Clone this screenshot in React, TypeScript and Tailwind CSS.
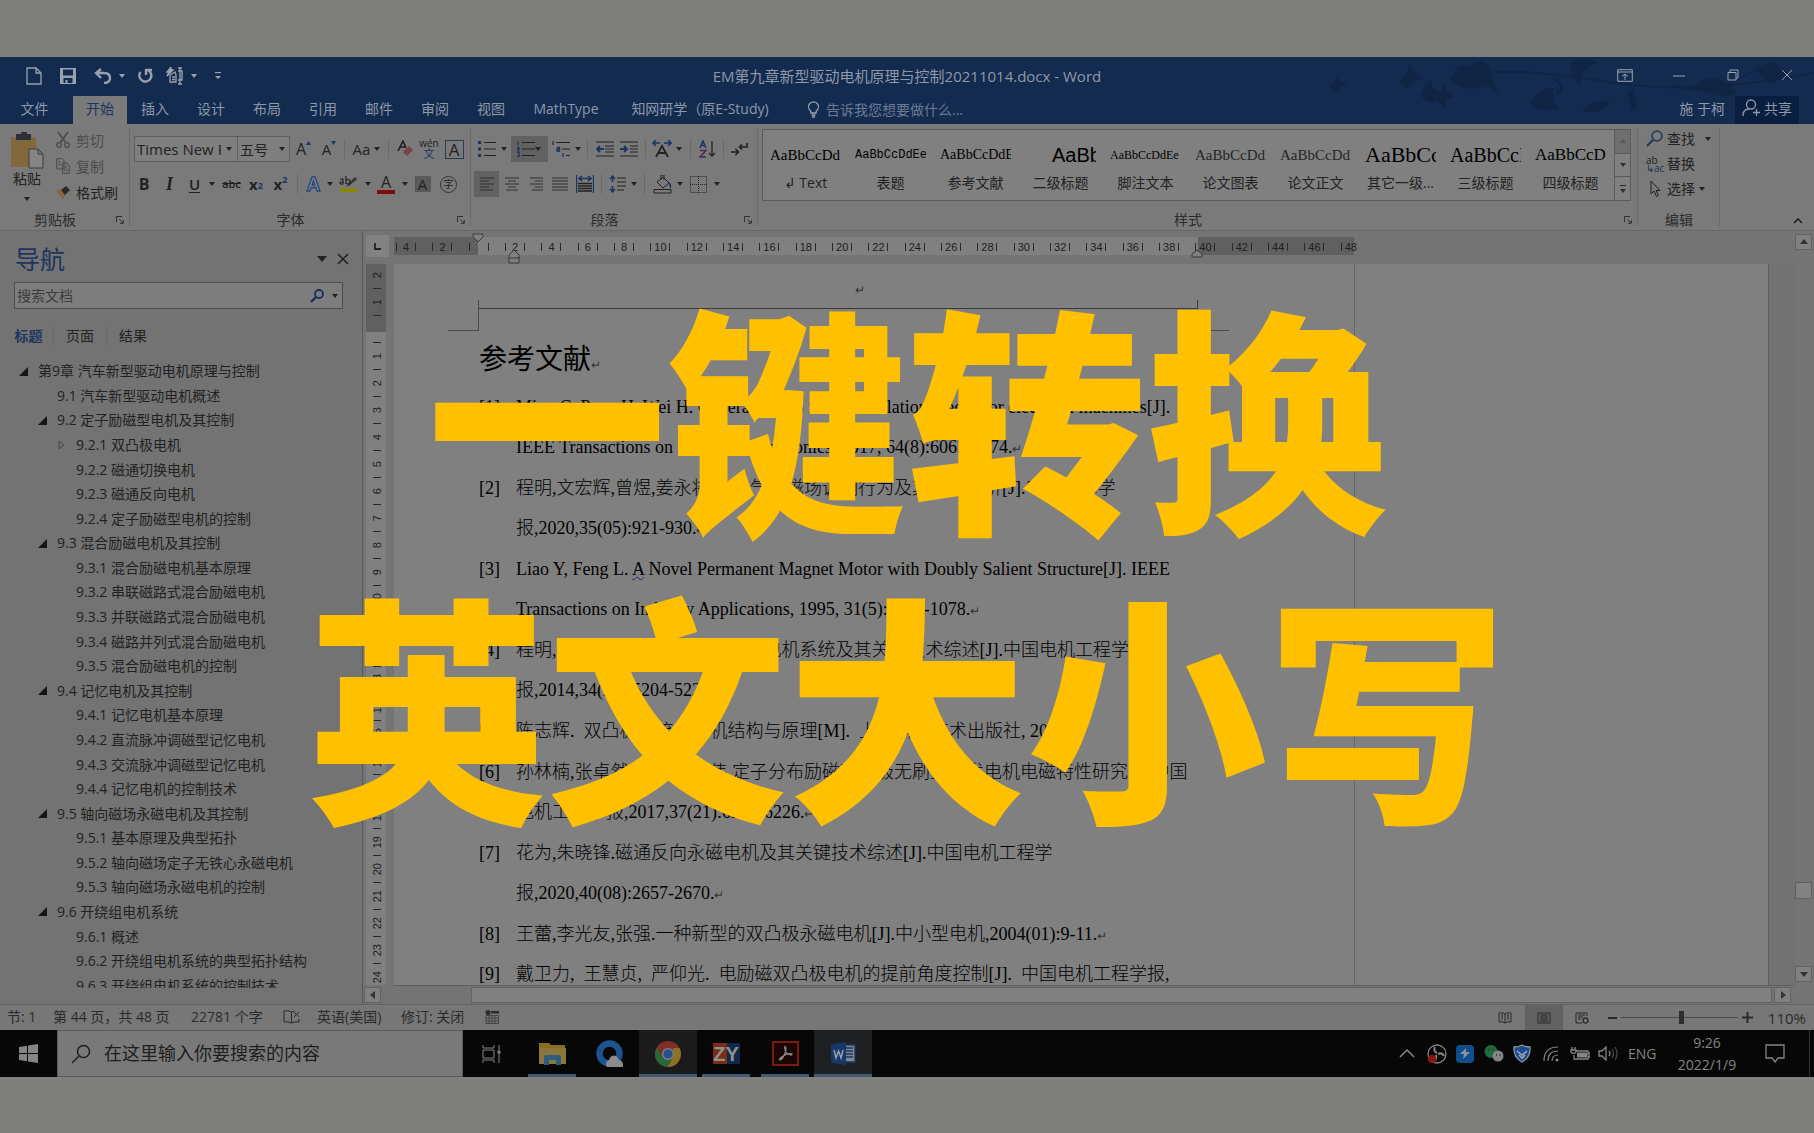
import { ReactNode } from 'react';
import clsx from 'clsx';

const UI = 'font-["Open_Sans","Noto_Sans_CJK_SC",sans-serif]';
const SERIF = 'font-["Liberation_Serif","Noto_Sans_CJK_SC",serif]';
const SANS = 'font-["Liberation_Sans","Noto_Sans_CJK_SC",sans-serif]';
const MONO = 'font-["Liberation_Mono",monospace]';

const TABS = ['插入', '设计', '布局', '引用', '邮件', '审阅', '视图'];

interface Heading {
    level: number;
    text: string;
    mark?: 'open' | 'closed';
}

const HEADINGS: Heading[] = [
    { level: 0, text: '第9章 汽车新型驱动电机原理与控制', mark: 'open' },
    { level: 1, text: '9.1 汽车新型驱动电机概述' },
    { level: 1, text: '9.2 定子励磁型电机及其控制', mark: 'open' },
    { level: 2, text: '9.2.1 双凸极电机', mark: 'closed' },
    { level: 2, text: '9.2.2 磁通切换电机' },
    { level: 2, text: '9.2.3 磁通反向电机' },
    { level: 2, text: '9.2.4 定子励磁型电机的控制' },
    { level: 1, text: '9.3 混合励磁电机及其控制', mark: 'open' },
    { level: 2, text: '9.3.1 混合励磁电机基本原理' },
    { level: 2, text: '9.3.2 串联磁路式混合励磁电机' },
    { level: 2, text: '9.3.3 并联磁路式混合励磁电机' },
    { level: 2, text: '9.3.4 磁路并列式混合励磁电机' },
    { level: 2, text: '9.3.5 混合励磁电机的控制' },
    { level: 1, text: '9.4 记忆电机及其控制', mark: 'open' },
    { level: 2, text: '9.4.1 记忆电机基本原理' },
    { level: 2, text: '9.4.2 直流脉冲调磁型记忆电机' },
    { level: 2, text: '9.4.3 交流脉冲调磁型记忆电机' },
    { level: 2, text: '9.4.4 记忆电机的控制技术' },
    { level: 1, text: '9.5 轴向磁场永磁电机及其控制', mark: 'open' },
    { level: 2, text: '9.5.1 基本原理及典型拓扑' },
    { level: 2, text: '9.5.2 轴向磁场定子无铁心永磁电机' },
    { level: 2, text: '9.5.3 轴向磁场永磁电机的控制' },
    { level: 1, text: '9.6 开绕组电机系统', mark: 'open' },
    { level: 2, text: '9.6.1 概述' },
    { level: 2, text: '9.6.2 开绕组电机系统的典型拓扑结构' },
    { level: 2, text: '9.6.3 开绕组电机系统的控制技术' },
];

const INDENT = ['pl-[16px]', 'pl-[35px]', 'pl-[54px]'];

const STYLES: { name: string; sample: string; look: string }[] = [
    { name: '↲ Text', sample: 'AaBbCcDd', look: `${SERIF} text-[15px] text-black` },
    { name: '表题', sample: 'AaBbCcDdEe', look: `${MONO} text-[12px] text-black` },
    { name: '参考文献', sample: 'AaBbCcDdEe', look: `${SERIF} text-[14px] text-black` },
    { name: '二级标题', sample: 'AaBbC', look: `${SANS} text-[20px] text-black pl-[27px]` },
    { name: '脚注文本', sample: 'AaBbCcDdEe', look: `${SERIF} text-[12px] text-black` },
    { name: '论文图表', sample: 'AaBbCcDdEe', look: `${SERIF} text-[15px] text-[#262626]` },
    { name: '论文正文', sample: 'AaBbCcDdEe', look: `${SERIF} text-[15px] text-[#262626]` },
    { name: '其它一级...', sample: 'AaBbCc', look: `${SERIF} text-[22px] text-black` },
    { name: '三级标题', sample: 'AaBbCcD', look: `${SERIF} text-[20px] text-black` },
    { name: '四级标题', sample: 'AaBbCcDd', look: `${SERIF} text-[17px] text-black` },
];

const REFS: { no?: string; text: ReactNode; end?: boolean }[] = [
    { no: '[1]', text: 'Ming C, Peng H, Wei H. General airgap field modulation theory for electrical machines[J].' },
    { text: 'IEEE Transactions on Industrial Electronics, 2017, 64(8):6063-6074.', end: true },
    { no: '[2]', text: '程明,文宏辉,曾煜,姜永将.电机气隙磁场调制行为及其转矩分析[J].电工技术学' },
    { text: '报,2020,35(05):921-930.', end: true },
    {
        no: '[3]',
        text: (
            <>
                Liao Y, Feng L. <u className="decoration-[#1c2f6c] decoration-wavy decoration-1">A</u> Novel Permanent Magnet Motor with Doubly Salient Structure[J]. IEEE
            </>
        ),
    },
    { text: 'Transactions on Industry Applications, 1995, 31(5):1069-1078.', end: true },
    { no: '[4]', text: '程明,张淦,花为.定子永磁型无刷电机系统及其关键技术综述[J].中国电机工程学' },
    { text: '报,2014,34(29):5204-5220.', end: true },
    { no: '[5]', text: '陈志辉.  双凸极直流发电机结构与原理[M].  上海科学技术出版社, 2014.', end: true },
    { no: '[6]', text: '孙林楠,张卓然,陈旭,王小伟.定子分布励磁双凸极无刷直流发电机电磁特性研究[J].中国' },
    { text: '电机工程学报,2017,37(21):6218-6226.', end: true },
    { no: '[7]', text: '花为,朱晓锋.磁通反向永磁电机及其关键技术综述[J].中国电机工程学' },
    { text: '报,2020,40(08):2657-2670.', end: true },
    { no: '[8]', text: '王蕾,李光友,张强.一种新型的双凸极永磁电机[J].中小型电机,2004(01):9-11.', end: true },
    { no: '[9]', text: '戴卫力,  王慧贞,  严仰光.  电励磁双凸极电机的提前角度控制[J].  中国电机工程学报,' },
];

const H_MARKS = ['4', '2', '', ...Array.from({ length: 24 }, (_, i) => String((i + 1) * 2))];
const V_MARKS = ['2', '1', '', ...Array.from({ length: 24 }, (_, i) => String(i + 1))];

function Svg({ w, h = w, box, className, children }: { w: number; h?: number; box?: string; className?: string; children: ReactNode }) {
    return (
        <svg width={w} height={h} viewBox={box ?? `0 0 ${w} ${h}`} fill="none" stroke="currentColor" strokeWidth="1.3" className={clsx('shrink-0', className)} aria-hidden="true">
            {children}
        </svg>
    );
}

function Caret({ className }: { className?: string }) {
    return (
        <Svg w={6} h={4} className={className}>
            <path d="M0 0h6L3 4z" fill="currentColor" stroke="none" />
        </Svg>
    );
}

function Tool({ label, className, children }: { label: string; className: string; children: ReactNode }) {
    return (
        <button type="button" aria-label={label} className={clsx('flex h-[26px] shrink-0 items-center justify-center', className)}>
            {children}
        </button>
    );
}

function Sep({ className }: { className: string }) {
    return (
        <span className={clsx('flex shrink-0 justify-center', className)}>
            <span className="h-5 w-px bg-[#6a6a6a]" />
        </span>
    );
}

function Group({ label, className, launcher = true, children }: { label: string; className: string; launcher?: boolean; children: ReactNode }) {
    return (
        <section aria-label={label} className={clsx('relative flex flex-col', className)}>
            <div className="flex-1">{children}</div>
            <p className={clsx('h-5 text-center leading-5 text-[#2b2b2b]', launcher && 'pr-5')}>{label}</p>
            {launcher && (
                <button type="button" aria-label={`${label}选项`} className="absolute right-1.5 bottom-1.5 text-[#2f2f2f]">
                    <Svg w={8}>
                        <path d="M.5 6V.5H6M3.5 3.5 7 7M7.3 4v3.3H4" strokeWidth="1" />
                    </Svg>
                </button>
            )}
            <span className="absolute top-1 right-0 bottom-1 w-px bg-[#6b6b6b]" />
        </section>
    );
}

function Lines({ rows }: { rows: [number, number][] }) {
    return (
        <Svg w={16} h={14} className="text-[#303030]">
            {rows.map(([from, to], i) => (
                <path key={i} d={`M${from} ${i * 3 + 1}H${to}`} strokeWidth="1" />
            ))}
        </Svg>
    );
}

function TitleBar() {
    return (
        <header className="relative shrink-0 overflow-hidden bg-[#142b50] text-[#8d98a8]">
            <svg className="absolute top-0 right-0 h-[67px] w-[560px]" viewBox="0 0 560 67" aria-hidden="true">
                <g fill="#102444">
                    <path d="M75 30q6-2 7-10l3-5v9l9 5-9 1 2 6-9-4z" />
                    <path d="M146 24l7-8 2-10 5 10 10 5-11 3-6 8zM166 38l5-10 6-5 2 9 12 5-11 2 1 8-10-4z" />
                    <path d="M178 42l8-6 3-12 4 10 9 5-10 4 0 11-7-9zM196 22q8-18 20-13 14-10 20 4l8 24-10-8q-24 8-38-7zM276 48q8-18 24-17-4 12 6 21-16 4-30-4zM318 6q12-8 24 0-16 4-16 22-12-10-8-22zM328 54q12-14 28-9-12 14-28 9zM374 34l6-3 3 20-6 3zM440 28q18-12 32-2l12 10q-24 8-44-8zM500 12l18-7 18 12-20 10z" />
                </g>
                <path d="M198 20q60-12 150 4 90 16 212-8M300 22q14 8 2 16M420 28q30 14 80-14" fill="none" stroke="#102444" strokeWidth="2" />
            </svg>

            <div className="relative flex h-[37px] items-center">
                <div className="flex w-[222px] shrink-0 items-center pl-[26px] text-[#98a1ae]">
                    <button type="button" aria-label="新建" className="w-[34px]">
                        <Svg w={16} h={18}>
                            <path d="M1 1h9l5 5v11H1zM10 1v5h5" />
                        </Svg>
                    </button>
                    <button type="button" aria-label="保存" className="w-[34px]">
                        <Svg w={16}>
                            <path d="M0 0h16v16H0zM3 1.500v6h10v-6zM3.500 10v5h2v-3h2v3h5v-5z" fill="currentColor" fillRule="evenodd" stroke="none" />
                        </Svg>
                    </button>
                    <button type="button" aria-label="撤消" className="flex w-[43px] items-center gap-[7px]">
                        <Svg w={18} h={16}>
                            <path d="M2 5h8q6 0 6 5t-6 5M7 1 2 5l5 5" strokeWidth="2.400" />
                        </Svg>
                        <Caret />
                    </button>
                    <button type="button" aria-label="重复" className="w-[29px]">
                        <Svg w={16}>
                            <path d="M3.500 4A6 6 0 1 0 11 2.200M9 1v6M8.500 2H15" strokeWidth="2.400" />
                        </Svg>
                    </button>
                    <button type="button" aria-label="触摸模式" className="flex w-[49px] items-center gap-[7px]">
                        <Svg w={18}>
                            <path d="M5 0 1 5h2L1 9l6-6H5z" fill="currentColor" />
                            <path d="M4 15V8l5-3 1 3v7zM6 10h3M6 12.500h3" />
                            <path d="M12 4h4v9h-4M14 1v16M12 1h4M12 17h4" />
                        </Svg>
                        <Caret />
                    </button>
                    <button type="button" aria-label="自定义快速访问工具栏">
                        <Svg w={6} h={8}>
                            <path d="M0 .5h6" />
                            <path d="M0 4h6L3 7z" fill="currentColor" stroke="none" />
                        </Svg>
                    </button>
                </div>
                <h1 className="flex-1 text-center text-[15px] leading-5">EM第九章新型驱动电机原理与控制20211014.docx - Word</h1>
                <div className="flex w-[222px] shrink-0 justify-end text-[#9aa2ae]">
                    <button type="button" aria-label="功能区显示选项" className="flex w-[54px] justify-center">
                        <Svg w={16} h={13}>
                            <path d="M.7.7h14.600v11.600H.7zM1 3h14M8 11V5M5 7.500 8 5l3 2.500" strokeWidth="1" />
                        </Svg>
                    </button>
                    <button type="button" aria-label="最小化" className="flex w-[54px] items-center justify-center">
                        <Svg w={12} h={2}>
                            <path d="M0 1h12" strokeWidth="1" />
                        </Svg>
                    </button>
                    <button type="button" aria-label="还原" className="flex w-[54px] justify-center">
                        <Svg w={12}>
                            <path d="M1 3.500h8V11H1zM3 3V1h8v8H9" strokeWidth="1" />
                        </Svg>
                    </button>
                    <button type="button" aria-label="关闭" className="flex w-[54px] justify-center">
                        <Svg w={12}>
                            <path d="m1 1 10 10M11 1 1 11" strokeWidth="1" />
                        </Svg>
                    </button>
                </div>
            </div>

            <nav className="relative flex h-[30px] items-center pt-0.5 text-[14px] [&>button]:h-full [&>button]:pb-1">
                <button type="button" className="w-[73px] pr-1 text-center">文件</button>
                <button type="button" className="w-[54px] bg-[#7a7a7a] text-[#1c3560]">开始</button>
                {TABS.map(tab => (
                    <button key={tab} type="button" className="w-14 text-center">{tab}</button>
                ))}
                <button type="button" className="w-[94px]">MathType</button>
                <button type="button" className="w-[174px]">知网研学（原E-Study)</button>
                <label className="ml-5 flex flex-1 items-center gap-1.5 pb-0.5 text-[#6c7b93]">
                    <Svg w={13} h={17} className="text-[#98a1ae]">
                        <path d="M4 12q0-2-2-4a5 5 0 1 1 9 0q-2 2-2 4zM4.500 14h4M5 16h3" />
                    </Svg>
                    <input aria-label="操作说明搜索" placeholder="告诉我您想要做什么..." className="w-[200px] bg-transparent outline-none placeholder:text-[#6c7b93]" />
                </label>
                <button type="button" className="mr-2.5">施 于柯</button>
                <button type="button" className="mr-[15px] flex w-16 items-center justify-center gap-1 bg-[#0a1f40]">
                    <Svg w={18}>
                        <circle cx="9" cy="5.500" r="4.500" />
                        <path d="M1 17q0-7 6-7M11 13.500h7M14.500 10v7" />
                    </Svg>
                    共享
                </button>
            </nav>
        </header>
    );
}

function ClipboardGroup() {
    return (
        <Group label="剪贴板" className="w-[130px] shrink-0">
            <div className="flex pt-[3px]">
                <button type="button" className="flex w-[56px] shrink-0 flex-col items-center pt-[5px] pr-0.5">
                    <Svg w={34} h={37}>
                        <path d="M1 5h25v30H1z" fill="#82683a" stroke="none" />
                        <path d="M6 2h5a3 3 0 0 1 6 0h4v6H6z" fill="#2d3038" stroke="none" />
                        <path d="M19 17h9l5 5v14H19zM28 17v5h5" fill="#858585" stroke="#3d3d3d" strokeWidth="1" />
                    </Svg>
                    <span className="leading-[20px]">粘贴</span>
                    <Caret className="mt-2" />
                </button>
                <div className="flex flex-col whitespace-nowrap">
                    <button type="button" className="flex h-[26px] items-center gap-1.5 text-[#4c4c4c]">
                        <Svg w={14} h={16}>
                            <path d="m2 0 8 11M12 0 4 11" strokeWidth="1.800" />
                            <circle cx="3" cy="13" r="2.300" />
                            <circle cx="11" cy="13" r="2.300" />
                        </Svg>
                        剪切
                    </button>
                    <button type="button" className="flex h-[26px] items-center gap-1.5 text-[#4c4c4c]">
                        <Svg w={14} h={16}>
                            <path d="M.7.7H6l2 2V11H.7zM6.500 5H11l2.300 3v7.300H6.500zM2.500 4h2M2.500 6.500h2M8 9h3M8 12h4" fill="#777" strokeWidth="1" />
                        </Svg>
                        复制
                    </button>
                    <button type="button" className="flex h-[26px] items-center gap-1.5">
                        <Svg w={14} h={15}>
                            <path d="m0 6 5-2 5 5-3 5z" fill="#86683a" stroke="none" />
                            <path d="m5 5 4 5 5-5-4-4z" fill="#2b2b2b" stroke="none" />
                        </Svg>
                        格式刷
                    </button>
                </div>
            </div>
        </Group>
    );
}

function FontGroup() {
    return (
        <Group label="字体" className="w-[341px] shrink-0">
            <div className="flex items-center pt-3 pl-1">
                <label className="relative flex h-[26px] w-[104px] items-center border border-[#5f5f5f] bg-[#7f7f7f]">
                    <select aria-label="字体名称" className="w-[86px] appearance-none overflow-hidden pl-0.5 text-[15px] whitespace-nowrap outline-none">
                        <option>Times New Roman</option>
                    </select>
                    <Caret className="absolute right-[5px]" />
                </label>
                <label className="relative flex h-[26px] w-[52px] items-center border border-l-0 border-[#5f5f5f] bg-[#7f7f7f]">
                    <select aria-label="字号" className="w-full appearance-none pl-0.5 outline-none">
                        <option>五号</option>
                    </select>
                    <Caret className="absolute right-1" />
                </label>
                <Tool label="增大字号" className="w-[27px] text-[16px]">
                    A
                    <Svg w={5} h={4} className="mb-3 text-[#1c3560]"><path d="M0 4h5L2.500 0z" fill="currentColor" stroke="none" /></Svg>
                </Tool>
                <Tool label="减小字号" className="w-6 text-[15px]">
                    A
                    <Svg w={5} h={4} className="mb-3 text-[#1c3560]"><path d="M0 0h5L2.500 4z" fill="currentColor" stroke="none" /></Svg>
                </Tool>
                <Sep className="w-[7px]" />
                <Tool label="更改大小写" className="w-[37px] gap-1 text-[15px]">Aa<Caret /></Tool>
                <Sep className="w-[7px]" />
                <Tool label="清除所有格式" className="w-[25px]">
                    <Svg w={16} h={18}>
                        <path d="M1 11 6 1l3 7M3 7h5" strokeWidth="1.600" />
                        <path d="m6 12 6-6 4 4-6 6z" fill="#7d4048" stroke="none" />
                    </Svg>
                </Tool>
                <Tool label="拼音指南" className="w-6 flex-col">
                    <span className="text-[10px] leading-[9px]">wén</span>
                    <span className="text-[11px] leading-[11px] text-[#1c3560]">文</span>
                </Tool>
                <Tool label="字符边框" className="w-[26px]">
                    <span className="h-[19px] w-[19px] border border-[#2c3c50] text-center text-[17px] leading-[17px]">A</span>
                </Tool>
            </div>
            <div className="flex items-center pt-[9px] pl-0.5">
                <Tool label="加粗" className="w-6 text-[16px] font-bold">B</Tool>
                <Tool label="倾斜" className={clsx('w-[27px] text-[18px] font-bold italic', SERIF)}>I</Tool>
                <Tool label="下划线" className="w-[23px] text-[15px] font-semibold underline underline-offset-2">U</Tool>
                <Tool label="下划线样式" className="w-3"><Caret /></Tool>
                <Tool label="删除线" className="w-[27px] text-[11px] font-semibold line-through">abc</Tool>
                <Tool label="下标" className="w-[22px] text-[15px] font-bold">x<sub className="text-[9px] text-[#1c3560]">2</sub></Tool>
                <Tool label="上标" className="w-[27px] text-[15px] font-bold">x<sup className="text-[9px] text-[#1c3560]">2</sup></Tool>
                <Sep className="w-[7px]" />
                <Tool label="文本效果" className="w-6">
                    <Svg w={15} h={16}>
                        <path d="M1 15 6 1h3l5 14h-3l-1-3.500H5L4 15zM6 9h3L7.500 4.500z" stroke="#254a78" fill="#7f8790" />
                    </Svg>
                </Tool>
                <Tool label="文本效果选项" className="w-[9px]"><Caret /></Tool>
                <Tool label="突出显示" className="w-[30px]">
                    <Svg w={20} h={18}>
                        <path d="M1 13h18v4H1z" fill="#87850a" stroke="none" />
                        <path d="m7 12 2-3 7-7 2 2-7 6z" fill="#333" stroke="none" />
                        <path d="M1 4.500q3-1.500 3 0V9q-3 .5-3-1t3-1.500M7 1v7.500q4 1 4-2T7 5" strokeWidth="1.200" />
                    </Svg>
                </Tool>
                <Tool label="突出显示颜色" className="w-[7px]"><Caret /></Tool>
                <Tool label="字体颜色" className="w-[30px] flex-col">
                    <span className="text-[16px] leading-[15px]">A</span>
                    <span className="h-1 w-[18px] bg-[#7d0d0d]" />
                </Tool>
                <Tool label="颜色选项" className="w-[7px]"><Caret /></Tool>
                <Tool label="字符底纹" className="w-[29px]">
                    <span className="h-4 w-4 bg-[#595959] text-center text-[15px] leading-4">A</span>
                </Tool>
                <Tool label="带圈字符" className="w-[23px]">
                    <span className="h-[17px] w-[17px] rounded-full border border-[#333] text-center text-[10px] leading-[15px]">字</span>
                </Tool>
            </div>
        </Group>
    );
}

function ParagraphGroup() {
    return (
        <Group label="段落" className="w-[287px] shrink-0">
            <div className="flex items-center pt-3 pl-[3px]">
                <Tool label="项目符号" className="w-[25px]">
                    <Svg w={18} h={16}>
                        <path d="M0 0h3v3H0zM0 6.500h3v3H0zM0 13h3v3H0z" fill="#1c3560" stroke="none" />
                        <path d="M6 1.500h12M6 8h12M6 14.500h12" strokeWidth="1" />
                    </Svg>
                </Tool>
                <Tool label="项目符号库" className="w-2.5"><Caret /></Tool>
                <Tool label="编号" className="ml-0.5 w-[37px] justify-between bg-[#626262] pr-1 pl-[3px]">
                    <Svg w={18} h={16}>
                        <path d="M1 0v4M0 6.500h2v2H0M0 11h2v4.500H0" stroke="#1c3560" />
                        <path d="M5 1.500h13M5 8h13M5 14.500h13" strokeWidth="1" />
                    </Svg>
                    <Caret />
                </Tool>
                <Tool label="多级列表" className="w-[25px]">
                    <Svg w={18} h={16}>
                        <path d="M1 0v4M5 6.500h2.500V10H5V8h2M11 12v4" stroke="#1c3560" />
                        <path d="M4 1.500h14M10 8h8M14 14.500h4" strokeWidth="1" />
                    </Svg>
                </Tool>
                <Tool label="多级列表库" className="w-[9px]"><Caret /></Tool>
                <Sep className="w-[11px]" />
                <Tool label="减少缩进量" className="w-6">
                    <Svg w={18} h={16}>
                        <path d="M0 1h18M9 5h9M9 8h9M9 11h9M0 15h18" strokeWidth="1" />
                        <path d="M8 8H1M4 5 1 8l3 3" stroke="#1c3560" strokeWidth="2" />
                    </Svg>
                </Tool>
                <Tool label="增加缩进量" className="w-6">
                    <Svg w={18} h={16}>
                        <path d="M0 1h18M10 5h8M10 8h8M10 11h8M0 15h18" strokeWidth="1" />
                        <path d="M0 8h7M4 5l3 3-3 3" stroke="#1c3560" strokeWidth="2" />
                    </Svg>
                </Tool>
                <Sep className="w-2" />
                <Tool label="中文版式" className="w-[26px]">
                    <Svg w={20} h={18}>
                        <path d="M8 3H1M4 0 1 3l3 3M12 3h7M16 0l3 3-3 3" stroke="#1c3560" strokeWidth="1.600" />
                        <path d="m4 17 6-11 6 11M6.500 13h7" strokeWidth="1.800" />
                    </Svg>
                </Tool>
                <Tool label="中文版式选项" className="w-[7px]"><Caret /></Tool>
                <Sep className="w-4" />
                <Tool label="排序" className="w-[19px]">
                    <Svg w={17} h={18}>
                        <path d="m1 8 3-7 3 7M2 5.500h4" stroke="#1c3560" strokeWidth="1.500" />
                        <path d="M1 10.500h6l-6 6.500h6" stroke="#4a2d55" strokeWidth="1.500" />
                        <path d="M13 1v15M10 13l3 3 3-3" />
                    </Svg>
                </Tool>
                <Sep className="w-3" />
                <Tool label="显示编辑标记" className="w-[21px]">
                    <Svg w={17} h={16}>
                        <path d="M16 2v4H9M11 3.500 8.500 6 11 8.500M0 11h7M4.500 8 7.500 11l-3 3" strokeWidth="1.600" />
                    </Svg>
                </Tool>
            </div>
            <div className="flex items-center pt-[9px] pl-[3px]">
                <Tool label="左对齐" className="w-[25px] bg-[#626262]"><Lines rows={[[1, 15], [1, 10], [1, 15], [1, 10], [1, 14]]} /></Tool>
                <Tool label="居中" className="w-[25px]"><Lines rows={[[1, 15], [4, 12], [1, 15], [4, 12], [2, 14]]} /></Tool>
                <Tool label="右对齐" className="w-6"><Lines rows={[[2, 15], [7, 15], [2, 15], [7, 15], [4, 15]]} /></Tool>
                <Tool label="两端对齐" className="w-6"><Lines rows={[[0, 16], [0, 16], [0, 16], [0, 16], [0, 16]]} /></Tool>
                <Tool label="分散对齐" className="w-[26px]">
                    <Svg w={18}>
                        <path d="M.5 0v18M17.500 0v18" stroke="#1c3560" />
                        <path d="M4 3.500h10M6 1 3 3.500 6 6M12 1l3 2.500L12 6" stroke="#1c3560" strokeWidth="1.600" />
                        <path d="M2 8.500h14M2 11h14M2 13.500h14M2 16h14" />
                    </Svg>
                </Tool>
                <Sep className="w-[7px]" />
                <Tool label="行和段落间距" className="w-6">
                    <Svg w={17} h={18}>
                        <path d="M3.500 1v6M1 4l2.500-3L6 4M3.500 11v6M1 14l2.500 3L6 14" stroke="#1c3560" strokeWidth="1.600" />
                        <path d="M8 3h9M8 7h9M8 11h9M8 15h7" strokeWidth="1" />
                    </Svg>
                </Tool>
                <Tool label="行距选项" className="w-[9px]"><Caret /></Tool>
                <Sep className="w-3" />
                <Tool label="底纹" className="w-[25px]">
                    <Svg w={20} h={19}>
                        <path d="m4 7 6-5 6 6-6 5zM8 5V0h3v5" strokeWidth="1" />
                        <path d="M16 7q3 2 2 6-2 0-2-6z" fill="#1c3560" stroke="none" />
                        <path d="M1 14.500h17v3.500H1z" strokeWidth="1" />
                    </Svg>
                </Tool>
                <Tool label="底纹颜色" className="w-2.5"><Caret /></Tool>
                <Tool label="边框" className="w-[26px]">
                    <Svg w={17}>
                        <path d="M.5.5h16v16H.5zM8.500 0v17M0 8.500h17" strokeWidth="1" strokeDasharray="1 1" />
                    </Svg>
                </Tool>
                <Tool label="边框选项" className="w-3"><Caret /></Tool>
            </div>
        </Group>
    );
}

function StylesGroup() {
    return (
        <Group label="样式" className="min-w-0 flex-1">
            <div className="mt-[5px] mr-[7px] ml-1 flex h-[72px] border border-[#5b5b5b] bg-[#808080]">
                <div className="flex min-w-0 flex-1 overflow-hidden">
                    {STYLES.map(style => (
                        <button key={style.name} type="button" className="flex w-[85px] shrink-0 flex-col px-[7px] pt-2.5">
                            <span className={clsx('block h-[30px] w-full overflow-hidden text-left leading-[30px] whitespace-nowrap', style.look)}>{style.sample}</span>
                            <span className="w-full text-center leading-[25px] whitespace-nowrap">{style.name}</span>
                        </button>
                    ))}
                </div>
                <div className="flex w-4 flex-col divide-y divide-[#5b5b5b] border-l border-[#5b5b5b] text-[#2f2f2f]">
                    <button type="button" aria-label="上一行" className="flex flex-1 items-center justify-center bg-[#6e6e6e] text-[#555]"><Caret className="rotate-180" /></button>
                    <button type="button" aria-label="下一行" className="flex flex-1 items-center justify-center"><Caret /></button>
                    <button type="button" aria-label="其他样式" className="flex flex-1 items-center justify-center">
                        <Svg w={6} h={8}>
                            <path d="M0 .5h6" />
                            <path d="M0 4h6L3 8z" fill="currentColor" stroke="none" />
                        </Svg>
                    </button>
                </div>
            </div>
        </Group>
    );
}

function EditGroup() {
    return (
        <div className="flex w-[176px] shrink-0">
            <Group label="编辑" className="w-[82px]" launcher={false}>
                <div className="flex flex-col pt-0.5 pl-2">
                    <button type="button" className="flex h-[25px] items-center gap-1">
                        <Svg w={17}>
                            <circle cx="11" cy="6" r="5" stroke="#1f3c58" strokeWidth="1.600" />
                            <path d="m7 10-6 6" stroke="#1f3c58" strokeWidth="2.200" />
                        </Svg>
                        查找
                        <Caret className="ml-1.5" />
                    </button>
                    <button type="button" className="flex h-[25px] items-center gap-1">
                        <span className="flex w-[17px] flex-col text-[10px] leading-[8px]">
                            <span className="text-left">ab</span>
                            <span className="text-right text-[#1f3050]">↳ac</span>
                        </span>
                        替换
                    </button>
                    <button type="button" className="flex h-[25px] items-center gap-1">
                        <Svg w={17} h={18}>
                            <path d="M5 1v13l3-3 2.500 5.500 2-1L10 10.500h4z" strokeWidth="1" />
                        </Svg>
                        选择
                        <Caret />
                    </button>
                </div>
            </Group>
            <button type="button" aria-label="折叠功能区" className="mt-auto mr-[11px] mb-1.5 ml-auto">
                <Svg w={10} h={7}><path d="m1 6 4-4 4 4" strokeWidth="1.600" /></Svg>
            </button>
        </div>
    );
}

function Mark({ kind }: { kind?: 'open' | 'closed' }) {
    if (kind === 'open') return <Svg w={9}><path d="M9 0v9H0z" fill="#151515" stroke="none" /></Svg>;
    if (kind === 'closed') return <Svg w={9} h={10}><path d="m2 1 5 4-5 4z" strokeWidth="1" stroke="#444" /></Svg>;
    return <span className="w-[9px] shrink-0" />;
}

function NavigationPane() {
    return (
        <aside className="flex w-[363px] shrink-0 flex-col overflow-hidden border-r border-[#5a5a5a] bg-[#737373] text-[#222]">
            <div className="flex items-center pt-2.5 pr-[13px] pl-[15px]">
                <h2 className="flex-1 text-[25px] leading-9 text-[#1c3560]">导航</h2>
                <button type="button" aria-label="任务窗格选项" className="mr-2.5"><Svg w={10} h={6}><path d="M0 0h10L5 6z" fill="currentColor" stroke="none" /></Svg></button>
                <button type="button" aria-label="关闭窗格"><Svg w={12}><path d="m1 1 10 10M11 1 1 11" strokeWidth="1.600" /></Svg></button>
            </div>
            <label className="mt-[5px] mr-[19px] ml-[14px] flex h-[27px] shrink-0 items-center border border-[#4f4f4f] bg-[#7d7d7d] pr-1 pl-0.5">
                <input type="search" aria-label="搜索文档" placeholder="搜索文档" className="min-w-0 flex-1 bg-transparent outline-none placeholder:text-[#3c3c3c]" />
                <Svg w={14} className="text-[#1c2f5c]">
                    <circle cx="9" cy="5" r="4" strokeWidth="1.800" />
                    <path d="m6 8-5 5" strokeWidth="2.400" />
                </Svg>
                <Caret className="ml-2" />
            </label>
            <div className="mt-[17px] flex h-5 items-center divide-x divide-[#6a6a6a]">
                <button type="button" className="w-[54px] pl-1 font-bold leading-5 text-[#1c3560]">标题</button>
                <button type="button" className="w-[53px] leading-5">页面</button>
                <button type="button" className="w-[52px] leading-5">结果</button>
            </div>
            <div className="mt-[13px] mb-4 flex-1 overflow-hidden">
                <ul className="grid h-[639px] auto-rows-fr">
                    {HEADINGS.map(heading => (
                        <li key={heading.text} className={clsx('flex items-center', INDENT[heading.level])}>
                            <button type="button" className="flex items-center gap-2.5 pl-[3px] whitespace-nowrap">
                                <Mark kind={heading.mark} />
                                <span className="leading-5">{heading.text}</span>
                            </button>
                        </li>
                    ))}
                </ul>
            </div>
        </aside>
    );
}

function HorizontalRuler() {
    return (
        <div className="relative h-[33px] shrink-0 text-[11px] leading-[18px] text-[#1d1d1d]">
            <div className="flex pt-1.5">
                <span className="h-[18px] w-[84px] bg-[#606060]" />
                <span className="h-[18px] w-[720px] bg-[#808080]" />
                <span className="h-[18px] w-[156px] bg-[#606060]" />
            </div>
            <div className={clsx('absolute top-[7px] -left-1.5 grid w-[981px] grid-cols-[repeat(27,minmax(0,1fr))]', SANS)}>
                {H_MARKS.map((mark, i) => (
                    <span key={i} className="flex items-center justify-center">
                        <i className="h-2 w-px shrink-0 bg-[#2a2a2a]" />
                        <span className="w-[18px] text-center">{mark}</span>
                        <i className={clsx('h-2 w-px shrink-0', i < H_MARKS.length - 1 && 'bg-[#2a2a2a]')} />
                    </span>
                ))}
            </div>
            <Svg w={12} h={10} className="absolute top-0.5 left-[78px]">
                <path d="M1 1h10v3L6 9 1 4z" fill="#808080" stroke="#3a3a3a" strokeWidth="1" />
            </Svg>
            <Svg w={12} h={15} className="absolute top-[18px] left-[114px]">
                <path d="M1 14V6l5-5 5 5v8zM1 9h10" fill="#808080" stroke="#3a3a3a" strokeWidth="1" />
            </Svg>
            <Svg w={12} h={9} className="absolute top-[18px] left-[797px]">
                <path d="M1 8V5l5-4 5 4v3z" fill="#808080" stroke="#3a3a3a" strokeWidth="1" />
            </Svg>
        </div>
    );
}

function VerticalRuler() {
    return (
        <div className="flex w-[31px] shrink-0 flex-col pl-[3px]">
            <button type="button" aria-label="制表符" className="mt-1 mb-[7px] flex h-[22px] w-[23px] shrink-0 items-center justify-center bg-[#828282]">
                <Svg w={7}><path d="M1 0v6h6" strokeWidth="1.800" /></Svg>
            </button>
            <div className="relative w-5 flex-1 overflow-hidden bg-[#808080]">
                <div className="h-[68px] bg-[#606060]" />
                <div className={clsx('absolute inset-x-0 -top-0.5 pl-0.5 text-[11px] text-[#1d1d1d]', SANS)}>
                    {V_MARKS.map((mark, i) => (
                        <span key={i} className="relative flex h-[27px] items-center justify-center">
                            <span className="rotate-180 [writing-mode:vertical-rl]">{mark}</span>
                            <i className="absolute bottom-0 h-px w-2 bg-[#2a2a2a]" />
                        </span>
                    ))}
                </div>
            </div>
            <span className="h-[19px] shrink-0" />
        </div>
    );
}

function ScrollButton({ label, d }: { label: string; d: string }) {
    return (
        <button type="button" aria-label={label} className="flex h-4 w-[17px] shrink-0 items-center justify-center border border-[#636363] bg-[#808080] text-[#333]">
            <Svg w={8}><path d={d} fill="currentColor" stroke="none" /></Svg>
        </button>
    );
}

function Page() {
    return (
        <article className={clsx('relative min-w-0 flex-1 overflow-hidden bg-[#808080] text-black', SERIF)}>
            <div className="h-full w-[961px] border-r border-[#676767]">
                <p className="h-9 pt-3.5 pl-[461px] text-[12px] leading-6 text-[#333]">↵</p>
                <div className="ml-[54px] flex h-[31px]">
                    <span className="w-[30px] border-b border-[#4a4a4a]" />
                    <span className="w-[720px] border-l border-[#4a4a4a]">
                        <span className="block h-[9px] border-r border-b border-[#3a3a3a]" />
                    </span>
                    <span className="w-[31px] border-b border-[#4a4a4a]" />
                </div>
                <div className="pl-[85px]">
                    <h2 className={clsx('h-14 pt-[9px] text-[28px] leading-10', SANS)}>
                        参考文献<small className="text-[12px] text-[#333]">↵</small>
                    </h2>
                    <div className="grid h-[608px] auto-rows-fr text-[18px] font-light">
                        {REFS.map((line, i) => (
                            <p key={i} className="flex items-center whitespace-pre">
                                <span className="w-[37px] shrink-0">{line.no}</span>
                                <span>
                                    {line.text}
                                    {line.end && <small className="text-[12px] text-[#333]">↵</small>}
                                </span>
                            </p>
                        ))}
                    </div>
                </div>
            </div>
            {/* Text cursor */}
            <Svg w={8} h={14} className="absolute top-[189px] left-[698px]">
                <path d="M1 1q3 0 3 2v8q0 2-3 2M7 1Q4 1 4 3M7 13q-3 0-3-2" strokeWidth="1" />
            </Svg>
        </article>
    );
}

function StatusBar() {
    return (
        <footer className="flex h-[26px] shrink-0 items-center border-t border-[#646464] bg-[#777] pb-0.5 text-[#2b2b2b]">
            <span className="w-[46px] pl-[7px]">节: 1</span>
            <span className="w-[138px] pl-[7px] whitespace-nowrap">第 44 页，共 48 页</span>
            <span className="w-[99px] pl-[7px]">22781 个字</span>
            <button type="button" aria-label="校对" className="w-[34px]">
                <Svg w={17} h={14}>
                    <path d="M8.500 13V2Q5 0 1 1v11q4-1 7.500 1 3-2 7.500-1V9M8.500 2q2-1 3-1M11 2l5 5M16 2l-5 5" strokeWidth="1" />
                </Svg>
            </button>
            <span className="w-[84px]">英语(美国)</span>
            <span className="w-[84px]">修订: 关闭</span>
            <Svg w={14}>
                <path d="M1 5.500h12.500v8H1zM1 8h12M1 11h12M4 5v8M7 5v8M10 5v8" strokeWidth="1" stroke="#444" />
                <path d="M6 1h8v2.500H6z" fill="currentColor" stroke="none" />
                <circle cx="3" cy="2.500" r="2.500" fill="currentColor" stroke="none" />
            </Svg>
            <div className="-mb-0.5 ml-auto flex h-[25px] items-center">
                <button type="button" aria-label="阅读视图" className="flex w-[40px] justify-center">
                    <Svg w={14} h={12}><path d="M7 11V2Q4 0 1 1v9q3-1 6 1 3-2 6-1V1Q10 0 7 2M3 3h2M3 5h2M3 7h2M9 3h2M9 5h2M9 7h2" strokeWidth="1" /></Svg>
                </button>
                <button type="button" aria-label="页面视图" className="flex h-full w-[38px] items-center justify-center bg-[#626262]">
                    <Svg w={14} h={12}><path d="M1 1h12v10H1zM3 3h8M3 5h8M3 7h8M3 9h8" strokeWidth="1" /></Svg>
                </button>
                <button type="button" aria-label="Web 版式视图" className="flex w-[38px] justify-center">
                    <Svg w={14} h={12}>
                        <path d="M7 11H1V1h11v3M3 3h7M3 5h5M3 7h3" strokeWidth="1" />
                        <circle cx="10.500" cy="8.500" r="2.500" />
                    </Svg>
                </button>
                <button type="button" aria-label="缩小" className="flex w-4 justify-end"><Svg w={9} h={2}><path d="M0 1h9" strokeWidth="2" /></Svg></button>
                <input
                    type="range"
                    aria-label="显示比例"
                    min={0}
                    max={100}
                    defaultValue={52}
                    className="mx-1 h-4 w-[117px] appearance-none bg-[linear-gradient(#4a4a4a,#4a4a4a)] bg-[length:100%_1px] bg-center bg-no-repeat [&::-webkit-slider-thumb]:h-[13px] [&::-webkit-slider-thumb]:w-[5px] [&::-webkit-slider-thumb]:appearance-none [&::-webkit-slider-thumb]:bg-[#2e2e2e]"
                />
                <button type="button" aria-label="放大"><Svg w={11}><path d="M0 5.500h11M5.500 0v11" strokeWidth="2" /></Svg></button>
                <span className="w-[61px] pr-2 text-right text-[15px] leading-5">110%</span>
            </div>
        </footer>
    );
}

function TaskButton({ label, className, bar, children }: { label: string; className?: string; bar?: string; children: ReactNode }) {
    return (
        <button type="button" aria-label={label} className={clsx('relative flex h-full w-[58px] items-center justify-center', className)}>
            {children}
            {bar && <span className={clsx('absolute bottom-0 h-[3px] bg-[#405a72]', bar)} />}
        </button>
    );
}

function Taskbar() {
    return (
        <div className="flex h-[47px] shrink-0 items-center bg-[#070707] text-[#858585]">
            <button type="button" aria-label="开始菜单" className="flex w-[57px] justify-center">
                <Svg w={19}>
                    <path d="m0 3 8-1.200V9H0zM9 1.600 19 0v9H9zM0 10h8v7.200L0 16zM9 10h10v9L9 17.400z" fill="currentColor" stroke="none" />
                </Svg>
            </button>
            <label className="flex h-full w-[406px] items-center gap-[13px] border border-[#5c5c5c] bg-[#797979] pl-[13px] text-[#1e1e1e]">
                <Svg w={20}>
                    <circle cx="12.500" cy="7.500" r="6" strokeWidth="1.500" />
                    <path d="m8 12-7 7" strokeWidth="1.500" />
                </Svg>
                <input type="search" aria-label="搜索" placeholder="在这里输入你要搜索的内容" className="min-w-0 flex-1 bg-transparent text-[18px] outline-none placeholder:text-[#1e1e1e]" />
            </label>
            <TaskButton label="任务视图">
                <Svg w={20} h={18}>
                    <path d="M1 0v3h11V0M1 18v-3h11v3M1 5h11v8H1zM17 0v5M17 8v10" strokeWidth="1" />
                    <path d="M15.500 5.500h3v3h-3z" fill="currentColor" stroke="none" />
                </Svg>
            </TaskButton>
            <TaskButton label="文件资源管理器" bar="w-12" className="ml-0.5">
                <Svg w={27} h={22}>
                    <path d="M0 0h10l2 2h14v19H0z" fill="#8a6c22" stroke="none" />
                    <path d="M0 5h27v16H0z" fill="#8c763c" stroke="none" />
                    <path d="M5 22v-8q0-2 2-2h13q2 0 2 2v8h-5v-5h-7v5z" fill="#2b5d7c" stroke="none" />
                </Svg>
            </TaskButton>
            <TaskButton label="QQ浏览器">
                <Svg w={28}>
                    <circle cx="13.500" cy="13.500" r="10" stroke="#1c5390" strokeWidth="6.500" />
                    <path d="M11 27q-3-5 2-7 2-6 7-4 2 1 3 4 5 1 4 7z" fill="#8c8c8c" stroke="none" />
                </Svg>
            </TaskButton>
            <TaskButton label="Chrome" bar="w-full" className="bg-[#1b1b1b]">
                <Svg w={26}>
                    <circle cx="13" cy="13" r="13" fill="#7d3026" stroke="none" />
                    <path d="M1.700 6.500A13 13 0 0 0 12.500 26l5-9H8z" fill="#26683a" stroke="none" />
                    <path d="M24.500 7A13 13 0 0 1 12.500 26l6-10-.5-9z" fill="#8a7424" stroke="none" />
                    <circle cx="13" cy="13" r="6" fill="#858585" stroke="none" />
                    <circle cx="13" cy="13" r="4.700" fill="#294f8c" stroke="none" />
                </Svg>
            </TaskButton>
            <TaskButton label="ZY" bar="w-12">
                <span className={clsx('flex h-[21px] w-[27px] items-center justify-center bg-linear-to-r from-[#7a2c14] from-50% to-[#10294a] to-50% text-[20px] font-bold text-[#8f8f8f]', SANS)}>ZY</span>
            </TaskButton>
            <TaskButton label="Acrobat" bar="w-12" className="ml-px">
                <Svg w={27} h={25}>
                    <path d="M1 1h25v23H1z" fill="#1a0605" stroke="#7a1a10" strokeWidth="2" />
                    <path d="M13 6q2 0 0 6-2 6-5 7-2-1 5-5 4-2 7-1 0 2-4 0-4-3-3-8z" stroke="#8a8a8a" />
                </Svg>
            </TaskButton>
            <TaskButton label="Word" bar="w-full" className="bg-[#1e2022]">
                <Svg w={25} h={23}>
                    <path d="M13 3h11v17H13z" fill="#80868e" stroke="#17386a" />
                    <path d="M15 6h7M15 9h7M15 12h7M15 15h7" stroke="#17386a" />
                    <path d="M0 2.500 15 0v23L0 20.500z" fill="#17386a" stroke="none" />
                    <path d="m3 8 2 8 2.500-7L10 16l2-8" stroke="#9aa0a8" strokeWidth="1.500" />
                </Svg>
            </TaskButton>

            <div className="ml-auto flex items-center">
                <button type="button" aria-label="显示隐藏的图标" className="w-[28px]"><Svg w={16} h={9}><path d="m1 8 7-7 7 7" strokeWidth="1.500" /></Svg></button>
                <span className="w-[29px]">
                    <Svg w={20}>
                        <circle cx="10" cy="10" r="9" />
                        <path d="M10 9q-4-2-2-6M11 10q4-2 6 2M9 11q1 4-2 6" strokeWidth="2" />
                        <circle cx="5" cy="15" r="4" fill="#8a1810" stroke="none" />
                    </Svg>
                </span>
                <span className="w-[28px]">
                    <Svg w={18}>
                        <rect width="18" height="18" rx="4" fill="#104d8c" stroke="none" />
                        <path d="m10 3-6 6h4l-1 5 7-7h-4z" fill="#8a93a0" stroke="none" />
                    </Svg>
                </span>
                <span className="w-[29px]">
                    <Svg w={20} h={17}>
                        <circle cx="7" cy="6.500" r="6.500" fill="#1f6b3b" stroke="none" />
                        <circle cx="14" cy="11" r="5.500" fill="#858585" stroke="none" />
                        <path d="M4.500 4.500h1M8.500 4.500h1M12 10h1M15.500 10h1" stroke="#222" />
                    </Svg>
                </span>
                <span className="w-[30px]">
                    <Svg w={18} h={19}>
                        <path d="M1 3q5 0 8-2 3 2 8 2 1 10-8 15Q0 13 1 3z" fill="#1c4d90" stroke="#8b93a0" />
                        <path d="m4 7 5 4 5-4M6 11l3 3 3-3" stroke="#a0a6b0" strokeWidth="1.600" />
                    </Svg>
                </span>
                <span className="w-[27px]">
                    <Svg w={16}>
                        <path d="M1 15Q1 1 15 1M5 15Q5 5 15 5M9 15q0-6 6-6" strokeWidth="1.200" />
                        <circle cx="14" cy="14" r="1.500" fill="currentColor" stroke="none" />
                    </Svg>
                </span>
                <span className="w-[28px]">
                    <Svg w={20} h={13}>
                        <path d="M6 4h12v8H4V8M2 0v3M5 0v3M1 3h5v2q-2.500 3-5 0zM18 6h2v4h-2" />
                        <path d="M7 5.500h10v5H7z" fill="currentColor" stroke="none" />
                    </Svg>
                </span>
                <span className="w-[30px]">
                    <Svg w={20} h={15}>
                        <path d="M1 5h3l4-4v13l-4-4H1zM11 5q2 2.500 0 5" />
                        <path d="M14 3q3 4.500 0 9M17 1q4 6.500 0 13" stroke="#444" />
                    </Svg>
                </span>
                <span className="w-[37px] text-[14px]">ENG</span>
                <time className="w-[84px] text-center text-[14px] leading-[22px]">9:26<br />2022/1/9</time>
                <button type="button" aria-label="通知" className="flex w-[52px] justify-center">
                    <Svg w={20} h={19}><path d="M1 1h18v13h-6l-3 4-3-4H1z" /></Svg>
                </button>
                <span className="mr-1 ml-2 h-[47px] w-px bg-[#333]" />
            </div>
        </div>
    );
}

export default function App() {
    return (
        <div className={clsx('relative flex h-screen min-h-[900px] flex-col overflow-hidden bg-[#7f7f7d] pt-[57px] pb-14 text-[14px]', UI)}>
            <TitleBar />
            <div className="flex h-[107px] shrink-0 border-b border-[#676767] bg-[#7a7a7a] text-[#222]">
                <ClipboardGroup />
                <FontGroup />
                <ParagraphGroup />
                <StylesGroup />
                <EditGroup />
            </div>
            <main className="flex min-h-0 flex-1 bg-[#747474] text-[#222]">
                <NavigationPane />
                <VerticalRuler />
                <div className="flex min-w-0 flex-1 flex-col">
                    <HorizontalRuler />
                    <div className="flex min-h-0 flex-1 border-b border-[#5f5f5f]">
                        <Page />
                        <span className="w-[27px] shrink-0 border-l border-[#606060] bg-[#727272]" />
                    </div>
                    <div className="-ml-[30px] flex h-[18px] shrink-0 items-center gap-0.5">
                        <ScrollButton label="向左滚动" d="M6 0v8L1 4z" />
                        <span className="ml-[88px] h-4 flex-1 border border-[#636363] bg-[#808080]" />
                        <ScrollButton label="向右滚动" d="M2 0v8l5-4z" />
                        <span className="w-0.5" />
                    </div>
                </div>
                <div className="flex w-[19px] shrink-0 flex-col pt-[3px] pb-[22px]">
                    <ScrollButton label="向上滚动" d="M0 6h8L4 1z" />
                    <span className="mt-auto h-[17px] w-[17px] border border-[#606060] bg-[#828282]" />
                    <span className="h-[67px]" />
                    <ScrollButton label="向下滚动" d="M0 2h8L4 7z" />
                </div>
            </main>
            <StatusBar />
            <Taskbar />

            {/* Caption laid over the whole frame */}
            <div className="pointer-events-none absolute inset-0 flex flex-col items-center justify-center pb-6 font-['Noto_Sans_CJK_SC',sans-serif] text-[240px] leading-[289px] font-black whitespace-nowrap text-[#ffc000]">
                <p>一键转换</p>
                <p>英文大小写</p>
            </div>
        </div>
    );
}
